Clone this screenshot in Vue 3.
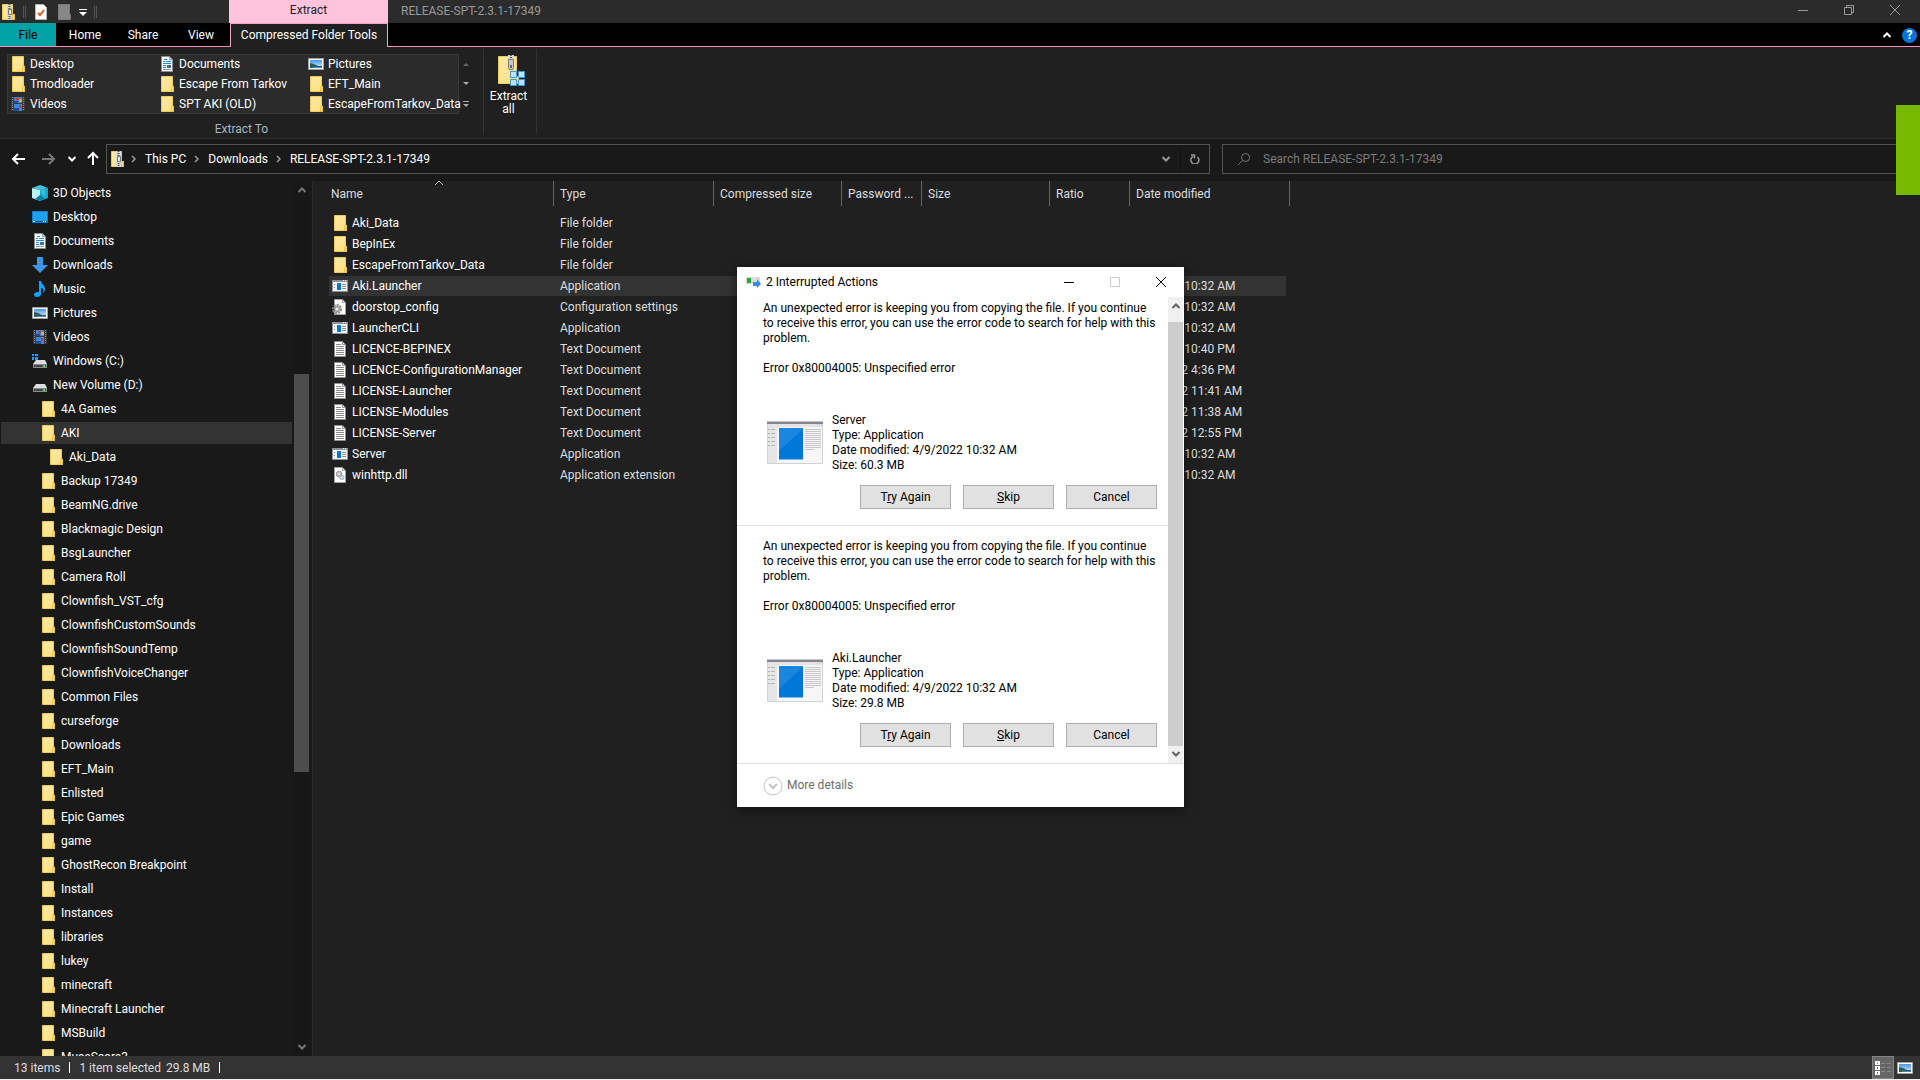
<template>
  <svg class="sprite" aria-hidden="true">
    <defs>
      <linearGradient id="g-folder" x1="0" y1="0" x2="1" y2="1">
        <stop offset="0" stop-color="#ffe9a6" />
        <stop offset="1" stop-color="#ffdf80" />
      </linearGradient>
      <linearGradient id="g-sky" x1="0" y1="0" x2="0" y2="1">
        <stop offset="0" stop-color="#4a98e8" />
        <stop offset="1" stop-color="#d6ecfa" />
      </linearGradient>
    </defs>
    <symbol id="i-folder" viewBox="0 0 16 16">
      <path d="M2.5.5h11v10h1v5h-12z" fill="url(#g-folder)" stroke="#f0cb55" />
      <path d="M12.5 15.5v-4l1-1.500h1v5.500z" fill="#ffe694" stroke="#e9bf3f" />
    </symbol>
    <symbol id="i-zip" viewBox="0 0 16 16">
      <path d="M2.5.5h10v10h2v5h-12z" fill="url(#g-folder)" stroke="#f0cb55" />
      <path d="M12.500 15.500v-5h2v5z" fill="#ffe694" stroke="#e9bf3f" />
      <path d="M7 0h5v16H7z" fill="#d8d8d8" />
      <path d="M9.500 0v16" stroke="#555" stroke-width="2" stroke-dasharray="1 1" />
      <path d="M8.500 5.500h3v5h-3z" fill="#e8e8e8" stroke="#777" />
    </symbol>
    <symbol id="i-docs" viewBox="0 0 16 16">
      <path d="M2.500.500h8l3 3v12h-11z" fill="#fff" stroke="#8e8e8e" />
      <path d="M10.500.500v3h3" fill="none" stroke="#8e8e8e" />
      <path d="M4 5.500h2M7 5.500h5M4 7.500h8M5 3.500h3M4 9.500h3M4 11.500h3" stroke="#1e88d8" />
      <path d="M8 9h4v3H8z" fill="#3c6f96" />
      <path d="M4 13.500h8" stroke="#999" />
    </symbol>
    <symbol id="i-pics" viewBox="0 0 16 16">
      <path d="M.5 2.500h15v11H.5z" fill="#fff" stroke="#a2a2a2" />
      <path d="M2 4h12v8H2z" fill="url(#g-sky)" />
      <path d="M2 7l4 1 4 2h4v2H2z" fill="#2f5d5c" />
      <path d="M6 11h8v1H4z" fill="#4d89b5" />
    </symbol>
    <symbol id="i-video" viewBox="0 0 16 16">
      <path d="M1 1h14v14H1z" fill="#3b3b3b" />
      <path d="M2.500 1v14M13.500 1v14" stroke="#8a8a8a" stroke-dasharray="1 1" />
      <path d="M4 1h8v6H4zM4 8h8v7H4z" fill="#3b86e0" />
      <path d="M6 2h3v2H6zM9 9h2v3H9z" fill="#c93a3a" />
      <path d="M9 3h3v3H9z" fill="#e0b03a" />
      <path d="M4 5h4v2H4zM4 12h5v3H4z" fill="#1d4f96" />
    </symbol>
    <symbol id="i-cube" viewBox="0 0 16 16">
      <path d="M0 3l8 2v11l-8-3z" fill="#bdf1f7" />
      <path d="M16 3L8 5v11l8-3z" fill="#16a9cf" />
      <path d="M0 3l8-3 8 3-8 2z" fill="#45c3dc" />
      <path d="M3 14l5-4 5 4-5 2z" fill="#0c7f9f" />
      <path d="M8 5l5 8V4z" fill="#2fc6e0" />
    </symbol>
    <symbol id="i-desktop" viewBox="0 0 16 16">
      <path d="M.5 2.500h15v11H.5z" fill="#1ba1fb" stroke="#0e7fd2" />
      <path d="M1 12.500h14" stroke="#0b5e9e" />
      <path d="M1 12.500h2M11 12.500h1M13 12.500h1" stroke="#fff" />
    </symbol>
    <symbol id="i-down" viewBox="0 0 16 16">
      <path d="M5 0h6v8h5l-8 8-8-8h5z" fill="#3a96e8" />
    </symbol>
    <symbol id="i-music" viewBox="0 0 16 16">
      <path d="M7 0h2c0 3 4 4 4 8 0 2-1 3-2 4 1-3 0-5-2-5v6c0 2-2 3-4 3s-3-1-3-2.500S4 11 5.500 11H7z" fill="#12a5ff" />
    </symbol>
    <symbol id="i-drive" viewBox="0 0 16 16">
      <path d="M4 7h9l2 4H1z" fill="#dcdcdc" />
      <path d="M1 11h14v4H1z" fill="#8c8c8c" />
      <path d="M2 12h12v2H2z" fill="#474747" />
      <path d="M11 12h2v2h-2z" fill="#3fe07c" />
    </symbol>
    <symbol id="i-windrive" viewBox="0 0 16 16">
      <use href="#i-drive" />
      <path d="M0 1h2v2H0zM3 1h3v2H3zM0 4h2v3H0zM3 4h3v3H3z" fill="#12a5ff" />
    </symbol>
    <symbol id="i-app" viewBox="0 0 16 16">
      <path d="M.5 2.500h15v11H.5z" fill="#f4f4f4" stroke="#8d9299" />
      <path d="M0 3h16" stroke="#8d9299" stroke-width="2" />
      <path d="M11 2.500h1M13 2.500h1" stroke="#fff" />
      <path d="M5 5h4v7H5z" fill="#0a74d6" />
      <path d="M2 6.500h1M2 9.500h1M10 6.500h4M10 8.500h4M10 10.500h4" stroke="#8d8d8d" />
    </symbol>
    <symbol id="i-txt" viewBox="0 0 16 16">
      <path d="M2.500.500h8l3 3v12h-11z" fill="#fff" stroke="#8e8e8e" />
      <path d="M10.500.500v3h3" fill="none" stroke="#8e8e8e" />
      <path d="M4 3.500h5M4 5.500h8M4 7.500h8M4 9.500h8M4 11.500h8M4 13.500h8" stroke="#8a8a8a" />
    </symbol>
    <symbol id="i-ini" viewBox="0 0 16 16">
      <path d="M2.500.500h8l3 3v12h-11z" fill="#fff" stroke="#a0a0a0" />
      <path d="M10.500.500v3h3" fill="none" stroke="#a0a0a0" />
      <circle cx="5" cy="10" r="4" fill="none" stroke="#858585" stroke-width="2" stroke-dasharray="2 1" />
      <circle cx="5" cy="10" r="2.500" fill="#c9c9c9" stroke="#858585" />
      <circle cx="5" cy="10" r="1" fill="#fff" />
    </symbol>
    <symbol id="i-dll" viewBox="0 0 16 16">
      <path d="M2.500.500h8l3 3v12h-11z" fill="#fff" stroke="#a0a0a0" />
      <path d="M10.500.500v3h3" fill="none" stroke="#a0a0a0" />
      <circle cx="7" cy="7" r="2.500" fill="#ddd" stroke="#8d8d8d" stroke-width="1.500" stroke-dasharray="1.500 .5" />
      <circle cx="10" cy="10.500" r="2" fill="#dce8f2" stroke="#8fa7bb" />
    </symbol>
    <symbol id="i-chev" viewBox="0 0 10 10">
      <path d="M1.500 3L5 6.500 8.500 3" fill="none" stroke="currentColor" stroke-width="2" />
    </symbol>
    <symbol id="i-close" viewBox="0 0 10 10">
      <path d="M0 0l10 10M10 0L0 10" fill="none" stroke="currentColor" />
    </symbol>
    <symbol id="i-big-app" viewBox="0 0 56 43">
      <path d="M.5.500h55v42H.5z" fill="#f6f6f6" stroke="#d2d2d2" />
      <path d="M0 0h56v1H0z" fill="#c4c6c8" />
      <path d="M0 1h56v2H0z" fill="#83878c" />
      <path d="M1 3h54v3H1z" fill="#e4e4e4" />
      <path d="M50 4h1M52 4h1M54 4h1" stroke="#bbb" />
      <path d="M1 6h9v36H1z" fill="#e6e6e6" />
      <path d="M1 8.500h2M4 8.500h4M1 12.500h2M4 12.500h4M1 16.500h2M4 16.500h4M1 20.500h2M4 20.500h4M1 24.500h2M4 24.500h4" stroke="#b4b4b4" />
      <path d="M12 7h24v32H12z" fill="#0078d7" />
      <path d="M12 7h24v1L12 30z" fill="#1b86de" />
      <path d="M12 38h24v1H12z" fill="#7db9ea" />
      <path d="M38 8.500h16M38 10.500h16M38 12.500h16M38 14.500h16M38 16.500h16M38 18.500h16M38 20.500h16M38 22.500h16M38 24.500h16M38 26.500h16M38 28.500h9" stroke="#c6c6c6" />
    </symbol>
  </svg>

  <div class="explorer">
    <header class="titlebar">
      <div class="quick-access">
        <svg class="icon"><use href="#i-zip" /></svg>
        <span class="grip"></span>
        <button class="plain" aria-label="Properties">
          <svg class="icon" viewBox="0 0 16 16">
            <path d="M2.500.500h8l3 3v12h-11z" fill="#fff" stroke="#b5b5b5" />
            <path d="M5 9l2 2 4-5" fill="none" stroke="#e2571e" stroke-width="2" />
          </svg>
        </button>
        <button class="plain" aria-label="New folder">
          <svg class="icon" viewBox="0 0 16 16">
            <path d="M2.500.500h11v10h1v5h-12z" fill="#888" stroke="#7a7a7a" />
          </svg>
        </button>
        <button class="plain" aria-label="Customize Quick Access Toolbar">
          <svg class="qat-arrow" viewBox="0 0 8 8">
            <path d="M0 1.500h8" stroke="#fff" />
            <path d="M0 4h8L4 8z" fill="#fff" />
          </svg>
        </button>
        <span class="grip"></span>
      </div>
      <div class="context-title">Extract</div>
      <div class="window-title">RELEASE-SPT-2.3.1-17349</div>
      <div class="window-buttons">
        <button class="plain" aria-label="Minimize">
          <svg class="small" viewBox="0 0 10 10"><path d="M0 5.500h10" stroke="currentColor" /></svg>
        </button>
        <button class="plain" aria-label="Restore">
          <svg class="small" viewBox="0 0 10 10">
            <path d="M.5 2.500h7v7h-7zM2.500 2V.5h7v7H8" fill="none" stroke="currentColor" />
          </svg>
        </button>
        <button class="plain" aria-label="Close">
          <svg class="small"><use href="#i-close" /></svg>
        </button>
      </div>
    </header>

    <nav class="tabs">
      <button
        v-for="tab in tabs"
        :key="tab.label"
        :class="['tab', tab.kind]"
      >
        {{ tab.label }}
      </button>
      <div class="tab-tools">
        <button class="plain" aria-label="Collapse the ribbon">
          <svg class="small flip"><use href="#i-chev" /></svg>
        </button>
        <button class="help" aria-label="Help">?</button>
      </div>
    </nav>

    <section class="ribbon">
      <div class="group extract-to">
        <div class="gallery">
          <div class="gallery-items">
            <button v-for="item in gallery" :key="item.label" class="gallery-item">
              <svg class="icon"><use :href="'#i-' + item.icon" /></svg>
              {{ item.label }}
            </button>
          </div>
          <div class="gallery-scroll">
            <button class="plain dim" aria-label="Scroll up">
              <svg class="tiny" viewBox="0 0 6 6"><path d="M0 5h6L3 2z" fill="currentColor" /></svg>
            </button>
            <button class="plain" aria-label="Scroll down">
              <svg class="tiny" viewBox="0 0 6 6"><path d="M0 1h6L3 4z" fill="currentColor" /></svg>
            </button>
            <button class="plain" aria-label="More">
              <svg class="tiny" viewBox="0 0 6 6">
                <path d="M0 .5h6" stroke="currentColor" />
                <path d="M0 3h6L3 6z" fill="currentColor" />
              </svg>
            </button>
          </div>
        </div>
        <div class="group-label">Extract To</div>
      </div>
      <div class="group">
        <button class="extract-all">
          <svg class="icon-large" viewBox="0 0 32 32">
            <path d="M5.500 1.500h18v20h2v7h-20z" fill="url(#g-folder)" stroke="#f0cb55" />
            <path d="M15 0h6v14h-6z" fill="#d5d5d5" />
            <path d="M18 0v14" stroke="#555" stroke-width="2" stroke-dasharray="1 1" />
            <path d="M15.500 4.500h5v8a2.500 2.500 0 0 1-5 0z" fill="#c9c9c9" stroke="#777" />
            <path d="M17 10h2v3h-2z" fill="#666" />
            <path d="M17.500 16.500h6v6h-6zM25.500 16.500h6v6h-6zM17.500 24.500h6v6h-6zM25.500 24.500h6v6h-6z" fill="#bfe2fa" stroke="#3f96d2" />
          </svg>
          <span>Extract</span>
          <span>all</span>
        </button>
      </div>
    </section>

    <div class="address-row">
      <button class="plain nav-back" aria-label="Back">
        <svg class="icon" viewBox="0 0 16 16">
          <path d="M8 3L3 8l5 5M3 8h12" fill="none" stroke="currentColor" stroke-width="2" />
        </svg>
      </button>
      <button class="plain nav-forward" aria-label="Forward">
        <svg class="icon" viewBox="0 0 16 16">
          <path d="M9 3l5 5-5 5M14 8H2" fill="none" stroke="currentColor" stroke-width="2" />
        </svg>
      </button>
      <button class="plain nav-recent" aria-label="Recent locations">
        <svg class="small"><use href="#i-chev" /></svg>
      </button>
      <button class="plain nav-up" aria-label="Up">
        <svg class="icon" viewBox="0 0 16 16">
          <path d="M3 7l5-5 5 5M8 2v12" fill="none" stroke="currentColor" stroke-width="2" />
        </svg>
      </button>
      <div class="address">
        <svg class="icon"><use href="#i-zip" /></svg>
        <template v-for="crumb in crumbs" :key="crumb">
          <svg class="crumb-sep" viewBox="0 0 10 10">
            <path d="M3 2l3 3-3 3" fill="none" stroke="currentColor" stroke-width="1.500" />
          </svg>
          <a href="#" class="crumb">{{ crumb }}</a>
        </template>
        <button class="plain address-end" aria-label="Previous locations">
          <svg class="small"><use href="#i-chev" /></svg>
        </button>
        <button class="plain refresh" aria-label="Refresh">
          <svg class="small" viewBox="0 0 10 10">
            <path d="M3 2.500A4 4 0 1 0 7.500 3M1 1h3.500v3.500" fill="none" stroke="currentColor" stroke-width="1.500" />
          </svg>
        </button>
      </div>
      <div class="search">
        <svg class="search-icon" viewBox="0 0 14 14">
          <circle cx="8.500" cy="5.500" r="4" fill="none" stroke="currentColor" />
          <path d="M5.500 8.500L1 13" stroke="currentColor" />
        </svg>
        <input v-model="query" type="text" aria-label="Search" placeholder="Search RELEASE-SPT-2.3.1-17349">
      </div>
    </div>

    <div class="main">
      <aside class="sidebar">
        <ul class="tree">
          <li v-for="(node, i) in tree" :key="i">
            <button :class="['node', 'level-' + node.level, { selected: node.selected }]">
              <svg class="icon"><use :href="'#i-' + node.icon" /></svg>
              {{ node.label }}
            </button>
          </li>
        </ul>
        <div class="tree-scroll">
          <svg class="small flip"><use href="#i-chev" /></svg>
          <div class="tree-track">
            <div class="tree-thumb"></div>
          </div>
          <svg class="small"><use href="#i-chev" /></svg>
        </div>
      </aside>

      <main class="content">
        <table class="files">
          <colgroup>
            <col class="col-name">
            <col class="col-type">
            <col class="col-wide">
            <col class="col-narrow">
            <col class="col-wide">
            <col class="col-narrow">
            <col class="col-type">
          </colgroup>
          <thead>
            <tr>
              <th v-for="(column, i) in columns" :key="column">
                <div class="th-label">
                  {{ column }}
                  <svg v-if="i === 0" class="sort" viewBox="0 0 10 10">
                    <path d="M1 6l4-4 4 4" fill="none" stroke="currentColor" />
                  </svg>
                </div>
              </th>
            </tr>
          </thead>
          <tbody>
            <tr
              v-for="file in files"
              :key="file.name"
              :class="{ selected: file.name === selectedFile }"
              @click="selectedFile = file.name"
            >
              <td class="name">
                <div class="name-cell">
                  <svg class="icon"><use :href="'#i-' + file.icon" /></svg>
                  {{ file.name }}
                </div>
              </td>
              <td>{{ file.type }}</td>
              <td></td>
              <td></td>
              <td></td>
              <td></td>
              <td class="date">{{ file.date }}</td>
            </tr>
          </tbody>
        </table>
      </main>
    </div>

    <footer class="statusbar">
      <span>{{ files.length }} items</span>
      <span class="status-sep"></span>
      <span>1 item selected</span>
      <span class="status-size">29.8 MB</span>
      <span class="status-sep"></span>
      <div class="views">
        <button class="view active" aria-label="Details view">
          <svg class="icon" viewBox="0 0 16 16">
            <path d="M0 1h5v4H0zM0 6h5v4H0zM0 11h5v4H0z" fill="#fff" />
            <path d="M2 3h1" stroke="#444" />
            <path d="M2 8h1" stroke="#1b74c8" stroke-width="2" />
            <path d="M2 13h1" stroke="#d04a22" stroke-width="2" />
            <path d="M6 3.500h4M12 3.500h4M6 7.500h4M12 7.500h4M6 11.500h4M12 11.500h4" stroke="#8a8a8a" />
          </svg>
        </button>
        <button class="view" aria-label="Large icons view">
          <svg class="icon"><use href="#i-pics" /></svg>
        </button>
      </div>
    </footer>

    <div class="overlay-strip"></div>

    <div class="dialog" role="dialog" aria-labelledby="dialog-title">
      <div class="dialog-header">
        <svg class="icon" viewBox="0 0 16 16">
          <path d="M0 3h14v7H0z" fill="#dcdcdc" />
          <path d="M1 4h4v5H1z" fill="#1fae2e" />
          <path d="M7 8h4V5l4 5-4 4v-2H7z" fill="#2f8fe6" />
        </svg>
        <h1 id="dialog-title">2 Interrupted Actions</h1>
        <div class="window-buttons">
          <button class="plain" aria-label="Minimize dialog">
            <svg class="small" viewBox="0 0 10 10"><path d="M0 5.500h10" stroke="currentColor" /></svg>
          </button>
          <button class="plain" aria-label="Maximize dialog" disabled>
            <svg class="small" viewBox="0 0 10 10"><path d="M.5.500h9v9h-9z" fill="none" stroke="#ccc" /></svg>
          </button>
          <button class="plain" aria-label="Close dialog">
            <svg class="small"><use href="#i-close" /></svg>
          </button>
        </div>
      </div>
      <div class="dialog-body">
        <div class="errors">
          <section v-for="error in errors" :key="error.name" class="error">
            <p>
              An unexpected error is keeping you from copying the file. If you continue
              to receive this error, you can use the error code to search for help with this
              problem.
            </p>
            <p>Error 0x80004005: Unspecified error</p>
            <div class="error-file">
              <svg class="app-thumb"><use href="#i-big-app" /></svg>
              <div>
                <div>{{ error.name }}</div>
                <div>Type: Application</div>
                <div>Date modified: 4/9/2022 10:32 AM</div>
                <div>Size: {{ error.size }}</div>
              </div>
            </div>
            <div class="error-actions">
              <button>T<u>r</u>y Again</button>
              <button><u>S</u>kip</button>
              <button>Cancel</button>
            </div>
          </section>
        </div>
        <div class="dialog-scroll">
          <svg class="small flip"><use href="#i-chev" /></svg>
          <div class="dialog-thumb"></div>
          <svg class="small"><use href="#i-chev" /></svg>
        </div>
      </div>
      <button class="more-details">
        <svg class="circle" viewBox="0 0 20 20">
          <circle cx="10" cy="10" r="9" fill="none" stroke="#c4c4c4" />
          <path d="M6 8l4 4 4-4" fill="none" stroke="#c4c4c4" stroke-width="2" />
        </svg>
        More details
      </button>
    </div>
  </div>
</template>

<script setup>
import { ref } from 'vue'

const query = ref('')
const selectedFile = ref('Aki.Launcher')

const tabs = [
  { label: 'File', kind: 'file' },
  { label: 'Home', kind: '' },
  { label: 'Share', kind: '' },
  { label: 'View', kind: '' },
  { label: 'Compressed Folder Tools', kind: 'active' }
]

const gallery = [
  { label: 'Desktop', icon: 'folder' },
  { label: 'Documents', icon: 'docs' },
  { label: 'Pictures', icon: 'pics' },
  { label: 'Tmodloader', icon: 'folder' },
  { label: 'Escape From Tarkov', icon: 'folder' },
  { label: 'EFT_Main', icon: 'folder' },
  { label: 'Videos', icon: 'video' },
  { label: 'SPT AKI (OLD)', icon: 'folder' },
  { label: 'EscapeFromTarkov_Data', icon: 'folder' }
]

const crumbs = ['This PC', 'Downloads', 'RELEASE-SPT-2.3.1-17349']

const folders = [
  'Backup 17349', 'BeamNG.drive', 'Blackmagic Design', 'BsgLauncher', 'Camera Roll',
  'Clownfish_VST_cfg', 'ClownfishCustomSounds', 'ClownfishSoundTemp', 'ClownfishVoiceChanger',
  'Common Files', 'curseforge', 'Downloads', 'EFT_Main', 'Enlisted', 'Epic Games', 'game',
  'GhostRecon Breakpoint', 'Install', 'Instances', 'libraries', 'lukey', 'minecraft',
  'Minecraft Launcher', 'MSBuild', 'MuseScore3'
]

const tree = [
  { label: '3D Objects', icon: 'cube', level: 1 },
  { label: 'Desktop', icon: 'desktop', level: 1 },
  { label: 'Documents', icon: 'docs', level: 1 },
  { label: 'Downloads', icon: 'down', level: 1 },
  { label: 'Music', icon: 'music', level: 1 },
  { label: 'Pictures', icon: 'pics', level: 1 },
  { label: 'Videos', icon: 'video', level: 1 },
  { label: 'Windows (C:)', icon: 'windrive', level: 1 },
  { label: 'New Volume (D:)', icon: 'drive', level: 1 },
  { label: '4A Games', icon: 'folder', level: 2 },
  { label: 'AKI', icon: 'folder', level: 2, selected: true },
  { label: 'Aki_Data', icon: 'folder', level: 3 },
  ...folders.map((label) => ({ label, icon: 'folder', level: 2 }))
]

const columns = ['Name', 'Type', 'Compressed size', 'Password ...', 'Size', 'Ratio', 'Date modified']

const files = [
  { name: 'Aki_Data', icon: 'folder', type: 'File folder', date: '' },
  { name: 'BepInEx', icon: 'folder', type: 'File folder', date: '' },
  { name: 'EscapeFromTarkov_Data', icon: 'folder', type: 'File folder', date: '' },
  { name: 'Aki.Launcher', icon: 'app', type: 'Application', date: '4/9/2022 10:32 AM' },
  { name: 'doorstop_config', icon: 'ini', type: 'Configuration settings', date: '4/9/2022 10:32 AM' },
  { name: 'LauncherCLI', icon: 'app', type: 'Application', date: '4/9/2022 10:32 AM' },
  { name: 'LICENCE-BEPINEX', icon: 'txt', type: 'Text Document', date: '4/5/2022 10:40 PM' },
  { name: 'LICENCE-ConfigurationManager', icon: 'txt', type: 'Text Document', date: '3/18/2022 4:36 PM' },
  { name: 'LICENSE-Launcher', icon: 'txt', type: 'Text Document', date: '3/18/2022 11:41 AM' },
  { name: 'LICENSE-Modules', icon: 'txt', type: 'Text Document', date: '3/18/2022 11:38 AM' },
  { name: 'LICENSE-Server', icon: 'txt', type: 'Text Document', date: '3/18/2022 12:55 PM' },
  { name: 'Server', icon: 'app', type: 'Application', date: '4/9/2022 10:32 AM' },
  { name: 'winhttp.dll', icon: 'dll', type: 'Application extension', date: '4/9/2022 10:32 AM' }
]

const errors = [
  { name: 'Server', size: '60.3 MB' },
  { name: 'Aki.Launcher', size: '29.8 MB' }
]
</script>

<style>
body {
  margin: 0;
  background: #202020;
}
</style>

<style scoped>
.sprite {
  position: absolute;
  width: 0;
  height: 0;
}

.explorer {
  position: relative;
  display: flex;
  flex-direction: column;
  height: 100vh;
  overflow: hidden;
  box-sizing: border-box;
  border-bottom: 1px solid #f0f0f0;
  background: #202020;
  color: #fff;
  font-family: "Segoe UI", Roboto, "Open Sans", sans-serif;
  font-size: 12px;
  line-height: 16px;
}

button,
input {
  font: inherit;
  color: inherit;
}

button {
  margin: 0;
  padding: 0;
  border: none;
  background: none;
  white-space: nowrap;
}

svg {
  display: block;
  flex: none;
}

.plain {
  display: flex;
  align-items: center;
  justify-content: center;
}

.icon {
  width: 16px;
  height: 16px;
}

.icon-large {
  width: 32px;
  height: 32px;
}

.small {
  width: 10px;
  height: 10px;
}

.tiny {
  width: 6px;
  height: 6px;
}

.qat-arrow {
  width: 8px;
  height: 8px;
}

.flip {
  transform: rotate(180deg);
}

/* title bar */
.titlebar {
  display: flex;
  height: 23px;
  background: #2b2b2b;
}

.quick-access {
  display: flex;
  align-items: center;
  gap: 7px;
  width: 229px;
}

.grip {
  width: 1px;
  height: 12px;
  border: 1px solid #555;
  border-width: 0 1px;
}

.context-title {
  width: 159px;
  background: #ffc3dc;
  color: #222;
  text-align: center;
  line-height: 20px;
}

.window-title {
  flex: 1;
  padding-left: 13px;
  color: #999;
  line-height: 23px;
}

.window-buttons {
  display: flex;
  color: #999;
}

.window-buttons .plain {
  width: 46px;
  height: 20px;
}

.titlebar .window-buttons {
  padding-right: 2px;
}

/* ribbon tabs */
.tabs {
  display: flex;
  height: 24px;
  background: #000;
  box-shadow: inset 0 -1px #ff8fbf;
}

.tab {
  width: 58px;
  padding-bottom: 1px;
}

.tab.file {
  width: 56px;
  height: 23px;
  padding-bottom: 0;
  background: #00a2a5;
  color: #000;
}

.tab.active {
  width: 158px;
  border: 1px solid #ff9fc8;
  border-bottom: none;
  background: #202020;
}

.tab-tools {
  display: flex;
  flex: 1;
  align-items: center;
  justify-content: flex-end;
  gap: 10px;
  padding-right: 3px;
}

.help {
  width: 15px;
  height: 15px;
  border-radius: 50%;
  background: #0a74d6;
  font-weight: bold;
  line-height: 15px;
}

/* ribbon */
.ribbon {
  display: flex;
  height: 91px;
  border-bottom: 1px solid #2d2d2d;
}

.group {
  margin: 2px 0 4px;
  border-right: 1px solid #333;
}

.extract-to {
  width: 483px;
}

.gallery {
  display: flex;
  margin: 5px 10px 0 7px;
}

.gallery-items {
  display: grid;
  flex: 1;
  grid-template-columns: 149px 149px 1fr;
  grid-auto-rows: 20px;
  align-content: center;
  box-sizing: border-box;
  min-width: 0;
  height: 60px;
  border: 1px solid #3a3a3a;
  background: #2b2b2b;
}

.gallery-item {
  display: flex;
  align-items: center;
  gap: 4px;
  min-width: 0;
  padding-left: 2px;
}

.gallery-scroll {
  display: grid;
  width: 14px;
  color: #aaa;
}

.dim {
  color: #666;
}

.group-label {
  margin-top: 7px;
  color: #aab4be;
  text-align: center;
}

.extract-all {
  display: flex;
  flex-direction: column;
  align-items: center;
  box-sizing: border-box;
  width: 52px;
  padding: 6px 3px 0 0;
  line-height: 13px;
}

.extract-all svg {
  margin-bottom: 3px;
}

/* address row */
.address-row {
  display: flex;
  align-items: center;
  box-sizing: border-box;
  height: 42px;
  padding: 0 0 2px 10px;
  background: #191919;
}

.nav-forward {
  margin-left: 14px;
  color: #777;
}

.nav-recent {
  margin-left: 11px;
}

.nav-up {
  margin-left: 8px;
}

.address {
  display: flex;
  align-items: center;
  box-sizing: border-box;
  width: 1104px;
  height: 30px;
  margin-left: 5px;
  padding-left: 2px;
  border: 1px solid #535353;
}

.crumb-sep {
  width: 10px;
  height: 10px;
  margin: 0 6px 0 4px;
  color: #999;
}

.crumb {
  padding-right: 2px;
  color: #fff;
  text-decoration: none;
}

.address-end {
  width: 28px;
  height: 28px;
  margin-left: auto;
  color: #999;
}

.refresh {
  width: 29px;
  height: 28px;
  border-left: 1px solid #111;
  color: #999;
}

.search {
  display: flex;
  flex: 1;
  align-items: center;
  gap: 12px;
  box-sizing: border-box;
  height: 30px;
  margin-left: 12px;
  padding-left: 14px;
  border: 1px solid #535353;
  color: #777;
}

.search-icon {
  width: 14px;
  height: 14px;
}

.search input {
  flex: 1;
  padding: 0;
  border: none;
  outline: none;
  background: none;
}

.search input::placeholder {
  color: #7a7a7a;
}

/* main area */
.main {
  display: flex;
  flex: 1;
  min-height: 0;
}

.sidebar {
  display: flex;
  width: 312px;
  overflow: hidden;
  border-right: 1px solid #2b2b2b;
  background: #191919;
}

.tree {
  flex: 1;
  margin: 0;
  padding: 0;
  list-style: none;
}

.node {
  display: flex;
  align-items: center;
  gap: 5px;
  box-sizing: border-box;
  width: 100%;
  height: 24px;
  border: 1px solid #191919;
  border-right-width: 2px;
}

.node.selected {
  background: #333;
}

.level-1 {
  padding-left: 31px;
}

.level-2 {
  padding-left: 39px;
}

.level-3 {
  padding-left: 47px;
}

.tree-scroll {
  display: flex;
  flex-direction: column;
  align-items: center;
  width: 15px;
  margin-right: 3px;
  padding: 4px 0;
  background: #171717;
  color: #777;
}

.tree-track {
  flex: 1;
  width: 15px;
}

.tree-thumb {
  height: 47%;
  margin-top: 179px;
  background: #4d4d4d;
}

.content {
  flex: 1;
  padding-left: 16px;
}

.files {
  width: 961px;
  border-collapse: separate;
  border-spacing: 0;
  table-layout: fixed;
}

.col-name {
  width: 225px;
}

.col-type {
  width: 160px;
}

.col-wide {
  width: 128px;
}

.col-narrow {
  width: 80px;
}

.files th {
  height: 32px;
  padding: 0;
  color: #dedede;
  font-weight: normal;
  text-align: left;
  vertical-align: top;
}

.th-label {
  position: relative;
  height: 25px;
  padding-left: 6px;
  border-right: 1px solid #636363;
  line-height: 26px;
  white-space: nowrap;
}

th:first-child .th-label {
  padding-left: 2px;
}

.sort {
  position: absolute;
  top: -2px;
  left: 50%;
  width: 10px;
  height: 10px;
  margin-left: -7px;
  color: #bbb;
}

.files td {
  height: 20px;
  padding: 0 0 0 6px;
  border-bottom: 1px solid transparent;
  background-clip: padding-box;
  color: #dedede;
  white-space: nowrap;
}

.files td.name {
  padding-left: 3px;
  color: #fff;
}

.files td.date {
  padding-left: 1px;
  border-right: 4px solid transparent;
}

.files .selected td {
  background-color: #333;
}

.name-cell {
  display: flex;
  align-items: center;
  gap: 4px;
}

/* status bar */
.statusbar {
  display: flex;
  align-items: center;
  height: 23px;
  padding-left: 14px;
  background: #333;
  color: #dedede;
}

.status-sep {
  width: 1px;
  height: 11px;
  margin: 0 9px;
  background: #fff;
}

.status-size {
  margin-left: 5px;
}

.views {
  display: flex;
  margin-left: auto;
  padding-right: 4px;
}

.view {
  display: flex;
  align-items: center;
  justify-content: center;
  box-sizing: border-box;
  width: 22px;
  height: 23px;
}

.view.active {
  border: 1px solid #838383;
  background: #666;
}

.overlay-strip {
  position: absolute;
  top: 105px;
  right: 0;
  width: 24px;
  height: 90px;
  background: #76b900;
}

/* dialog */
.dialog {
  position: absolute;
  top: 267px;
  left: 737px;
  width: 447px;
  background: #fff;
  box-shadow: 0 2px 12px rgba(0, 0, 0, 0.5);
  color: #000;
  line-height: 15px;
}

.dialog-header {
  display: flex;
  align-items: center;
  gap: 4px;
  height: 30px;
  padding-left: 9px;
}

.dialog-header h1 {
  flex: 1;
  margin: 0;
  font-size: 12px;
  font-weight: normal;
}

.dialog-header .window-buttons {
  color: #000;
}

.dialog-body {
  display: flex;
  border-bottom: 1px solid #dfdfdf;
}

.errors {
  flex: 1;
}

.error {
  padding: 13px 11px 16px 26px;
}

.error:first-child {
  padding-top: 4px;
  border-bottom: 1px solid #dfdfdf;
}

.error p {
  margin: 0 0 15px;
}

.error-file {
  display: flex;
  gap: 9px;
  margin: 37px 0 12px 4px;
}

.app-thumb {
  width: 56px;
  height: 43px;
  margin-top: 8px;
}

.error-actions {
  display: flex;
  justify-content: flex-end;
  gap: 12px;
}

.error-actions button {
  box-sizing: border-box;
  width: 91px;
  height: 24px;
  border: 1px solid #adadad;
  background: #e1e1e1;
}

.dialog-scroll {
  display: flex;
  flex-direction: column;
  align-items: center;
  width: 15px;
  margin-right: 1px;
  padding: 4px 0;
  background: #f0f0f0;
  color: #606060;
}

.dialog-thumb {
  flex: 1;
  width: 15px;
  margin: 11px 0 3px;
  background: #cdcdcd;
}

.more-details {
  display: flex;
  align-items: center;
  gap: 4px;
  height: 43px;
  padding-left: 26px;
  color: #6d6d6d;
}

.circle {
  width: 20px;
  height: 20px;
}
</style>
